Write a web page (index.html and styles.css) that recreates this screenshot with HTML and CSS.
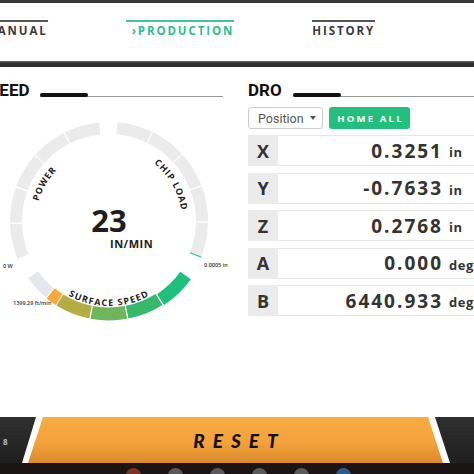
FILE: index.html
```html
<!DOCTYPE html>
<html lang="en">
<head>
    <meta charset="UTF-8">
    <meta name="viewport" content="width=device-width, initial-scale=1.0">
    <title>Production</title>
    <link rel="stylesheet" href="styles.css">
</head>
<body>
    <div class="topbar"></div>
    <nav class="tabs">
        <a class="tab">MANUAL</a>
        <a class="tab active">›PRODUCTION</a>
        <a class="tab">HISTORY</a>
    </nav>
    <div class="divider"></div>

    <main class="panels">
        <section class="panel feed">
            <div class="panel-title"><h2>FEED</h2><span class="rule"></span></div>
            <svg class="gauge" width="240" height="215" viewBox="0 0 240 215">
                <defs>
                    <path id="arc-power" d="M40.4 136 A73 73 0 0 1 96.3 39.1"/>
                    <path id="arc-chip" d="M121.7 39.1 A73 73 0 0 1 177.6 136"/>
                    <path id="arc-speed" d="M35.4 153.5 A85 85 0 0 0 182.6 153.5"/>
                </defs>
                <g transform="rotate(-90 109 111)">
                    <!-- power -->
                    <circle class="seg" cx="109" cy="111" r="93" pathLength="360" stroke-dasharray="20.7 360" stroke-dashoffset="-247.5"/>
                    <circle class="seg" cx="109" cy="111" r="93" pathLength="360" stroke-dasharray="20.7 360" stroke-dashoffset="-269"/>
                    <circle class="seg" cx="109" cy="111" r="93" pathLength="360" stroke-dasharray="20.7 360" stroke-dashoffset="-290.5"/>
                    <circle class="seg" cx="109" cy="111" r="93" pathLength="360" stroke-dasharray="20.7 360" stroke-dashoffset="-312"/>
                    <circle class="seg" cx="109" cy="111" r="93" pathLength="360" stroke-dasharray="20.7 360" stroke-dashoffset="-333.5"/>
                    <!-- chip load -->
                    <circle class="seg" cx="109" cy="111" r="93" pathLength="360" stroke-dasharray="20.7 360" stroke-dashoffset="-5"/>
                    <circle class="seg" cx="109" cy="111" r="93" pathLength="360" stroke-dasharray="20.7 360" stroke-dashoffset="-26.5"/>
                    <circle class="seg" cx="109" cy="111" r="93" pathLength="360" stroke-dasharray="20.7 360" stroke-dashoffset="-48"/>
                    <circle class="seg" cx="109" cy="111" r="93" pathLength="360" stroke-dasharray="20.7 360" stroke-dashoffset="-69.5"/>
                    <circle class="seg" cx="109" cy="111" r="93" pathLength="360" stroke-dasharray="20.7 360" stroke-dashoffset="-91"/>
                    <circle class="seg tick" cx="109" cy="111" r="93" pathLength="360" stroke-dasharray="0.8 360" stroke-dashoffset="-111"/>
                    <!-- surface speed -->
                    <circle class="seg pale" cx="109" cy="111" r="93" pathLength="360" stroke-dasharray="15.2 360" stroke-dashoffset="-219.5"/>
                    <circle class="seg fill s1" cx="109" cy="111" r="93" pathLength="360" stroke-dasharray="6.4 360" stroke-dashoffset="-212.5"/>
                    <circle class="seg fill s2" cx="109" cy="111" r="93" pathLength="360" stroke-dasharray="20.4 360" stroke-dashoffset="-191.5"/>
                    <circle class="seg fill s3" cx="109" cy="111" r="93" pathLength="360" stroke-dasharray="21.2 360" stroke-dashoffset="-169.5"/>
                    <circle class="seg fill s4" cx="109" cy="111" r="93" pathLength="360" stroke-dasharray="21.2 360" stroke-dashoffset="-147.5"/>
                    <circle class="seg fill s5" cx="109" cy="111" r="94" pathLength="360" stroke-dasharray="21.2 360" stroke-dashoffset="-125.5"/>
                </g>
                <text class="arc-label"><textPath href="#arc-power" startOffset="50%" text-anchor="middle">POWER</textPath></text>
                <text class="arc-label"><textPath href="#arc-chip" startOffset="50%" text-anchor="middle">CHIP LOAD</textPath></text>
                <text class="arc-label wide"><textPath href="#arc-speed" startOffset="50%" text-anchor="middle">SURFACE SPEED</textPath></text>
                <text class="value" x="109" y="122" text-anchor="middle">23</text>
                <text class="units" x="110" y="138">IN/MIN</text>
                <text class="limit" x="3" y="158">0 W</text>
                <text class="limit" x="204" y="157">0.0005 in</text>
                <text class="limit" x="13" y="195">1399.29 ft/min</text>
            </svg>
        </section>

        <section class="panel dro">
            <div class="panel-title"><h2>DRO</h2><span class="rule"></span></div>
            <div class="dro-controls">
                <button class="select">Position <span class="caret"></span></button>
                <button class="home">HOME ALL</button>
            </div>
            <div class="axes">
                <div class="axis">
                    <span class="axis-name">X</span>
                    <span class="axis-reading"><span class="axis-value">0.3251</span><span class="axis-unit">in</span></span>
                </div>
                <div class="axis">
                    <span class="axis-name">Y</span>
                    <span class="axis-reading"><span class="axis-value">-0.7633</span><span class="axis-unit">in</span></span>
                </div>
                <div class="axis">
                    <span class="axis-name">Z</span>
                    <span class="axis-reading"><span class="axis-value">0.2768</span><span class="axis-unit">in</span></span>
                </div>
                <div class="axis">
                    <span class="axis-name">A</span>
                    <span class="axis-reading"><span class="axis-value">0.000</span><span class="axis-unit">deg</span></span>
                </div>
                <div class="axis">
                    <span class="axis-name">B</span>
                    <span class="axis-reading"><span class="axis-value">6440.933</span><span class="axis-unit">deg</span></span>
                </div>
            </div>
        </section>
    </main>

    <footer class="actions">
        <div class="side side-left"><span>8</span></div>
        <button class="reset">RESET</button>
        <div class="side side-right"></div>
    </footer>
    <div class="taskbar">
        <span class="dot red"></span>
        <span class="dot"></span>
        <span class="dot"></span>
        <span class="dot"></span>
        <span class="dot"></span>
        <span class="dot blue"></span>
    </div>
</body>
</html>
```

FILE: styles.css
```css
body {
    margin: 0;
    width: 474px;
    height: 474px;
    overflow: hidden;
    background-color: #fff;
    font-family: 'Open Sans', sans-serif;
    color: #333;
}
.topbar {
    height: 3px;
    background-color: #3a3a3a;
}
.tabs {
    height: 58px;
    box-sizing: border-box;
    padding-top: 17px;
    margin-left: -15px;
    display: flex;
    align-items: flex-start;
    gap: 78px;
}
.tab {
    border-top: 2px solid #555;
    padding-top: 2px;
    font-size: 11.5px;
    line-height: 14px;
    font-weight: 700;
    letter-spacing: 1.9px;
    color: #3a3a3a;
}
.tab.active {
    border-color: #3cc6a0;
    color: #2bbf8e;
    padding-left: 6px;
}
.divider {
    height: 6px;
    background: linear-gradient(#666, #2a2a2a 45%, #333);
}
.panels {
    display: flex;
    gap: 25px;
    height: 350px;
    box-sizing: border-box;
    padding-top: 13px;
}
.panel {
    flex: none;
}
.feed {
    width: 233px;
    margin-left: -10px;
}
.dro {
    width: 260px;
}
.panel-title {
    display: flex;
    align-items: flex-end;
    gap: 10px;
    height: 20px;
}
.panel-title h2 {
    margin: 0;
    font-family: Roboto, sans-serif;
    font-size: 17px;
    line-height: 20px;
    font-weight: 700;
    color: #111;
}
.dro .panel-title {
    gap: 11px;
}
.rule {
    flex: 1;
    height: 4px;
    margin-bottom: 3px;
    background: linear-gradient(#999, #999) bottom / 100% 1px no-repeat;
}
.rule::before {
    content: '';
    display: block;
    width: 48px;
    height: 4px;
    border-radius: 2px;
    background-color: #111;
}

/* gauge */
.gauge {
    display: block;
    margin: 10px 0 0 10px;
    overflow: visible;
}
.seg {
    fill: none;
    stroke: #ebebeb;
    stroke-width: 12;
}
.seg.tick {
    stroke: #49c3a3;
}
.seg.pale {
    stroke: #e4e8ec;
}
.seg.fill {
    stroke-width: 13;
}
.s1 { stroke: #f7a93b; }
.s2 { stroke: #b3ad44; }
.s3 { stroke: #6db65a; }
.s4 { stroke: #37b86a; }
.s5 { stroke: #1dc07c; stroke-width: 15; }
.gauge text {
    font-family: 'Open Sans', sans-serif;
    font-weight: 700;
    fill: #222;
}
.arc-label {
    font-size: 9px;
    letter-spacing: 0.8px;
}
.arc-label.wide {
    letter-spacing: 1.2px;
}
.gauge .value {
    font-size: 31px;
    fill: #1e1e1e;
}
.gauge .units {
    font-size: 11px;
    letter-spacing: 0.5px;
}
.gauge .limit {
    font-size: 5.5px;
    font-weight: 600;
    fill: #333;
}

/* dro */
.dro-controls {
    display: flex;
    gap: 6px;
    margin-top: 7px;
    height: 22px;
}
.select {
    width: 75px;
    height: 22px;
    padding: 0 0 0 9px;
    display: flex;
    align-items: center;
    gap: 6px;
    border: 1px solid #ccc;
    border-radius: 3px;
    background-color: #fff;
    font-family: Roboto, sans-serif;
    font-size: 12.5px;
    color: #555;
}
.caret {
    border-left: 3.5px solid transparent;
    border-right: 3.5px solid transparent;
    border-top: 4px solid #555;
}
.home {
    width: 81px;
    height: 22px;
    padding: 0 0 0 2px;
    border: none;
    border-radius: 3px;
    background-color: #22bf7e;
    color: #fff;
    font-family: 'Open Sans', sans-serif;
    font-size: 9.5px;
    font-weight: 700;
    letter-spacing: 2.2px;
}
.axes {
    display: flex;
    flex-direction: column;
    gap: 6.5px;
    margin-top: 6px;
}
.axis {
    display: flex;
    height: 31px;
}
.axis-name {
    width: 30px;
    display: flex;
    align-items: center;
    justify-content: center;
    background-color: #ebebeb;
    font-size: 18px;
    font-weight: 700;
    color: #333;
}
.axis-reading {
    flex: 1;
    display: flex;
    align-items: center;
    border: 1px solid #e6e6e6;
    border-left: none;
}
.axis-value {
    flex: 1;
    text-align: right;
    font-size: 19px;
    font-weight: 700;
    letter-spacing: 2px;
    color: #333;
}
.axis-unit {
    width: 64px;
    box-sizing: border-box;
    padding: 3px 0 0 6px;
    font-size: 13px;
    font-weight: 700;
    letter-spacing: 0.5px;
    color: #333;
}

/* footer */
.actions {
    display: flex;
    height: 46px;
    background: linear-gradient(90deg, #fff, #e8e8e8 50%, #fff);
}
.side {
    flex: none;
    background: linear-gradient(#2f2f2f, #1f1f1f);
}
.side-left {
    width: 36px;
    clip-path: polygon(0 0, 100% 0, 22px 100%, 0 100%);
    box-sizing: border-box;
    padding: 19px 0 0 3px;
    font-size: 8px;
    font-weight: 700;
    color: #bbb;
}
.reset {
    flex: none;
    width: 415px;
    margin-left: -8px;
    padding: 0 0 0 8px;
    border: none;
    background: linear-gradient(#faab42, #f3a23c 55%, #d98a2b);
    clip-path: polygon(15px 0, calc(100% - 15px) 0, 100% 100%, 0 100%);
    font-family: Lato, sans-serif;
    font-style: italic;
    font-weight: 900;
    font-size: 19px;
    letter-spacing: 8px;
    color: #111;
}
.side-right {
    flex: 1;
    margin-left: -8px;
    clip-path: polygon(0 0, 100% 0, 100% 100%, 15px 100%);
}
.taskbar {
    height: 11px;
    display: flex;
    gap: 27px;
    padding-left: 126px;
    background-color: #1c1414;
}
.dot {
    flex: none;
    width: 15px;
    height: 15px;
    margin-top: 5px;
    border-radius: 50%;
    background-color: #5a5a5a;
}
.dot.red {
    background-color: #7a3424;
}
.dot.blue {
    background-color: #2b5d8c;
}
```
